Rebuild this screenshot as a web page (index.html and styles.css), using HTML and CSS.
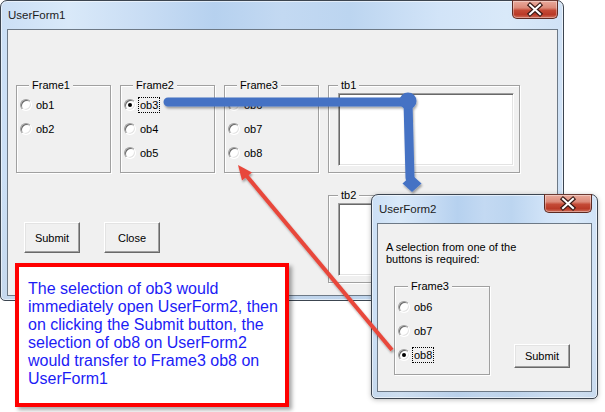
FILE: index.html
```html
<!DOCTYPE html>
<html>
<head>
<meta charset="utf-8">
<title>UserForms</title>
<link rel="stylesheet" href="styles.css">
</head>
<body>
<div class="desktop">
  <section class="window uf1">
    <header class="titlebar">
      <span class="title">UserForm1</span>
      <span class="close close-wide">
        <svg width="46" height="19" viewBox="0 0 46 19"><path d="M18 5 L28 14 M28 5 L18 14" stroke="#3b1b17" stroke-width="4.4" stroke-linecap="square"/><path d="M18 5 L28 14 M28 5 L18 14" stroke="#fff" stroke-width="2" stroke-linecap="square"/></svg>
      </span>
    </header>
    <div class="client">
      <div class="layout">
        <div class="frame radio-frame">
          <div class="frame-label">Frame1</div>
          <div class="opt"><span class="radio"></span><span class="opt-text">ob1</span></div>
          <div class="opt"><span class="radio"></span><span class="opt-text">ob2</span></div>
        </div>
        <div class="frame radio-frame">
          <div class="frame-label">Frame2</div>
          <div class="opt"><span class="radio on"></span><span class="opt-text focus">ob3</span></div>
          <div class="opt"><span class="radio"></span><span class="opt-text">ob4</span></div>
          <div class="opt"><span class="radio"></span><span class="opt-text">ob5</span></div>
        </div>
        <div class="frame radio-frame">
          <div class="frame-label">Frame3</div>
          <div class="opt"><span class="radio"></span><span class="opt-text">ob6</span></div>
          <div class="opt"><span class="radio"></span><span class="opt-text">ob7</span></div>
          <div class="opt"><span class="radio"></span><span class="opt-text">ob8</span></div>
        </div>
        <div class="frame tb-frame">
          <div class="frame-label">tb1</div>
          <div class="textbox"></div>
        </div>
        <div class="buttons">
          <button class="btn">Submit</button>
          <button class="btn">Close</button>
        </div>
        <div class="frame tb-frame">
          <div class="frame-label">tb2</div>
          <div class="textbox"></div>
        </div>
      </div>
    </div>
  </section>

  <section class="window uf2">
    <header class="titlebar">
      <span class="title">UserForm2</span>
      <span class="close close-narrow">
        <svg width="48" height="19" viewBox="0 0 48 19"><path d="M19 5 L29 14 M29 5 L19 14" stroke="#3b1b17" stroke-width="4.4" stroke-linecap="square"/><path d="M19 5 L29 14 M29 5 L19 14" stroke="#fff" stroke-width="2" stroke-linecap="square"/></svg>
      </span>
    </header>
    <div class="client">
      <div class="uf2-body">
        <p class="msg">A selection from one of the<br>buttons is required:</p>
        <div class="uf2-row">
          <div class="frame radio-frame small">
            <div class="frame-label">Frame3</div>
            <div class="opt"><span class="radio"></span><span class="opt-text">ob6</span></div>
            <div class="opt"><span class="radio"></span><span class="opt-text">ob7</span></div>
            <div class="opt"><span class="radio on"></span><span class="opt-text focus">ob8</span></div>
          </div>
          <button class="btn btn-small">Submit</button>
        </div>
      </div>
    </div>
  </section>

  <div class="note">The selection of ob3 would immediately open UserForm2, then on clicking the Submit button, the selection of ob8 on UserForm2 would transfer to Frame3 ob8 on UserForm1</div>

  <svg class="arrows" width="605" height="412" viewBox="0 0 605 412">
    <defs>
      <filter id="sh" x="-20%" y="-20%" width="140%" height="140%">
        <feDropShadow dx="1" dy="2" stdDeviation="1.3" flood-color="#000" flood-opacity="0.35"/>
      </filter>
    </defs>
    <g filter="url(#sh)">
      <path d="M168 102 H408 L410 178" stroke="#4472c4" stroke-width="9" fill="none" stroke-linecap="round" stroke-linejoin="round"/>
      <circle cx="408" cy="101" r="8.5" fill="#4472c4"/>
      <polygon points="412,175 421.5,183.5 412,192 402.5,183.5" fill="#4472c4"/>
    </g>
    <g filter="url(#sh)">
      <path d="M392 350 L245 174" stroke="#e8473b" stroke-width="4" fill="none"/>
      <polygon points="238,165 252,172.5 242,180.5" fill="#e8473b"/>
    </g>
  </svg>
</div>
</body>
</html>
```

FILE: styles.css
```css
* { box-sizing: border-box; }
html, body { margin: 0; padding: 0; }
body {
  width: 605px;
  height: 412px;
  overflow: hidden;
  background: #fff;
  font-family: "Liberation Sans", Arial, sans-serif;
  font-size: 11px;
  color: #000;
}
.desktop { position: relative; width: 605px; height: 412px; }

/* Aero windows */
.window {
  position: absolute;
  display: flex;
  flex-direction: column;
  border: 1px solid #3c4550;
  border-radius: 7px 7px 5px 5px;
  background:
    linear-gradient(180deg, rgba(255,255,255,0) 0, rgba(255,255,255,0) 60%, rgba(190,208,228,0.45) 100%),
    linear-gradient(90deg, #cbdff5 0%, #d9e9f9 12%, #c9ddf4 25%, #b6d1ef 38%, #c3d9f2 50%, #bcd5f0 62%, #d2e4f8 78%, #d9e9f9 90%, #d0e2f6 100%);
  box-shadow: inset 0 0 0 1px rgba(255,255,255,0.55);
}
.uf1 { left: 0; top: 0; width: 564px; height: 301px; }
.uf2 { left: 371px; top: 194px; width: 227px; height: 205px; box-shadow: inset 0 0 0 1px rgba(255,255,255,0.55), 0 1px 5px rgba(0,0,0,0.25); }

.titlebar {
  flex: none;
  height: 28px;
  display: flex;
  justify-content: space-between;
  align-items: flex-start;
  padding: 0 5px 0 7px;
}
.title { font-size: 11.5px; line-height: 28px; color: #1c1c1c; }
.close {
  display: block;
  height: 19px;
  margin-top: -1px;
  border: 1px solid #5c2a22;
  border-top-color: #6b3a33;
  border-radius: 0 0 5px 5px;
  background: linear-gradient(180deg, #e9aa9c 0%, #dc8a79 40%, #c44a36 55%, #b93a27 80%, #d0705c 100%);
  box-shadow: inset 0 0 0 1px rgba(255,255,255,0.35);
  overflow: hidden;
}
.close svg { display: block; margin: -1px 0 0 -1px; }
.close-wide { width: 46px; }
.close-narrow { width: 48px; }

.client {
  flex: 1;
  margin: 0 5px 4px 6px;
  border: 1px solid #6d7986;
  background: #f0f0f0;
}
.uf2 .client { margin: 0 5px 6px 5px; }

/* UserForm1 layout */
.layout {
  display: grid;
  grid-template-columns: 95px 95px 95px 192px;
  column-gap: 9px;
  row-gap: 22px;
  padding: 55px 0 0 8px;
  align-items: start;
}

.frame {
  border: 1px solid #a0a0a0;
  box-shadow: inset 1px 1px 0 #fff, 1px 1px 0 #fff;
}
.frame-label {
  display: table;
  margin: -7px 0 1px 9px;
  padding: 0 3px;
  line-height: 13px;
  background: #f0f0f0;
}
.radio-frame { height: 88px; padding-left: 3px; }
.radio-frame.small { width: 96px; height: 89px; flex: none; }
.radio-frame.small .frame-label { margin: -7px 0 2px 10px; }

.opt { display: flex; align-items: center; height: 24px; }
.radio {
  flex: none;
  width: 12px;
  height: 12px;
  margin-right: 2px;
  border-radius: 50%;
  background: #fff;
  border: 1px solid;
  border-color: #a0a0a0 #fff #fff #a0a0a0;
  box-shadow: inset 1px 1px 0 #6a6a6a, inset -1px -1px 0 #e3e3e3;
}
.radio.on::after {
  content: "";
  display: block;
  width: 4px;
  height: 4px;
  margin: 3px;
  border-radius: 50%;
  background: #000;
}
.opt-text { border: 1px dotted transparent; padding: 0 1px; line-height: 14px; }
.opt-text.focus { border-color: #000; }

.tb-frame { height: 88px; }
.tb-frame .frame-label { margin-left: 9px; }
.textbox {
  width: 176px;
  height: 73px;
  margin: 0 0 0 9px;
  background: #fff;
  border: 1px solid;
  border-color: #a0a0a0 #fff #fff #a0a0a0;
  box-shadow: inset 1px 1px 0 #696969, inset -1px -1px 0 #e3e3e3;
}

.buttons {
  grid-column: 1 / 4;
  display: flex;
  gap: 24px;
  padding: 27px 0 0 8px;
}
.btn {
  width: 56px;
  height: 31px;
  padding: 0;
  font-family: "Liberation Sans", Arial, sans-serif;
  font-size: 11px;
  color: #000;
  background: #f0f0f0;
  border: 1px solid;
  border-color: #fff #696969 #696969 #fff;
  box-shadow: inset -1px -1px 0 #a0a0a0, inset 1px 1px 0 #e3e3e3;
  border-radius: 0;
}
.btn-small { height: 24px; margin: 0 0 7px 24px; }

/* UserForm2 body */
.uf2-body { padding: 17px 0 0 8px; }
.msg { margin: 0; line-height: 12px; }
.uf2-row { display: flex; align-items: flex-end; margin: 21px 0 0 8px; }

/* annotation */
.note {
  position: absolute;
  left: 15px;
  top: 263px;
  width: 274px;
  height: 144px;
  border: 4px solid #ff0000;
  background: #fff;
  padding: 13px 7px 0 9px;
  font-family: "Liberation Sans", Arial, sans-serif;
  font-size: 16px;
  line-height: 18px;
  color: #1c1cf6;
  box-shadow: 3px 3px 4px rgba(0,0,0,0.35);
}

.arrows { position: absolute; left: 0; top: 0; pointer-events: none; }
```
